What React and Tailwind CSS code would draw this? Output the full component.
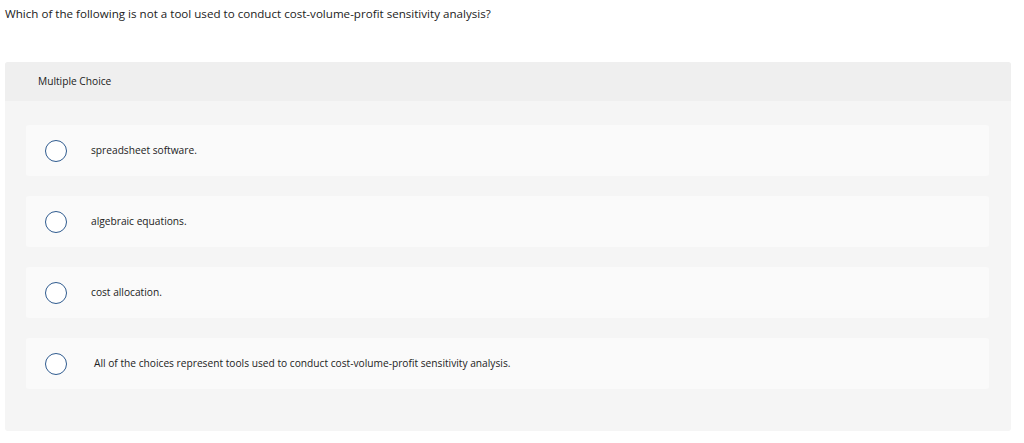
import React from 'react';

const choices = [
  { id: 'a', label: 'spreadsheet software.' },
  { id: 'b', label: 'algebraic equations.' },
  { id: 'c', label: 'cost allocation.' },
  { id: 'd', label: 'All of the choices represent tools used to conduct cost-volume-profit sensitivity analysis.', shift: true },
];

export default function App() {
  return (
    <div className="w-[1024px] h-[443px] bg-white text-[#222] font-['Open_Sans','Liberation_Sans',sans-serif]">
      <p className="pl-[5px] pt-[7px] text-[11.6px] leading-[14px]">
        Which of the following is not a tool used to conduct cost-volume-profit sensitivity analysis?
      </p>

      <div className="ml-[5px] mt-[41px] w-[1006px] rounded-[3px] bg-[#f5f5f5] overflow-hidden">
        <div className="h-[39px] bg-[#efefef] pl-[33px] flex items-center">
          <span className="text-[10.2px]">Multiple Choice</span>
        </div>

        <div className="px-[21px] pt-[24px] pb-[42px] flex flex-col gap-[20px]">
          {choices.map((c) => (
            <label
              key={c.id}
              className="h-[51px] w-[963px] rounded-[3px] bg-[#fafafa] flex items-center cursor-pointer"
            >
              <span className="ml-[19px] w-[22px] h-[22px] rounded-full border border-[#2f5b8f] bg-white shrink-0" />
              <span className={`${c.shift ? 'ml-[27px]' : 'ml-[24px]'} text-[10.2px]`}>{c.label}</span>
            </label>
          ))}
        </div>
      </div>
    </div>
  );
}
